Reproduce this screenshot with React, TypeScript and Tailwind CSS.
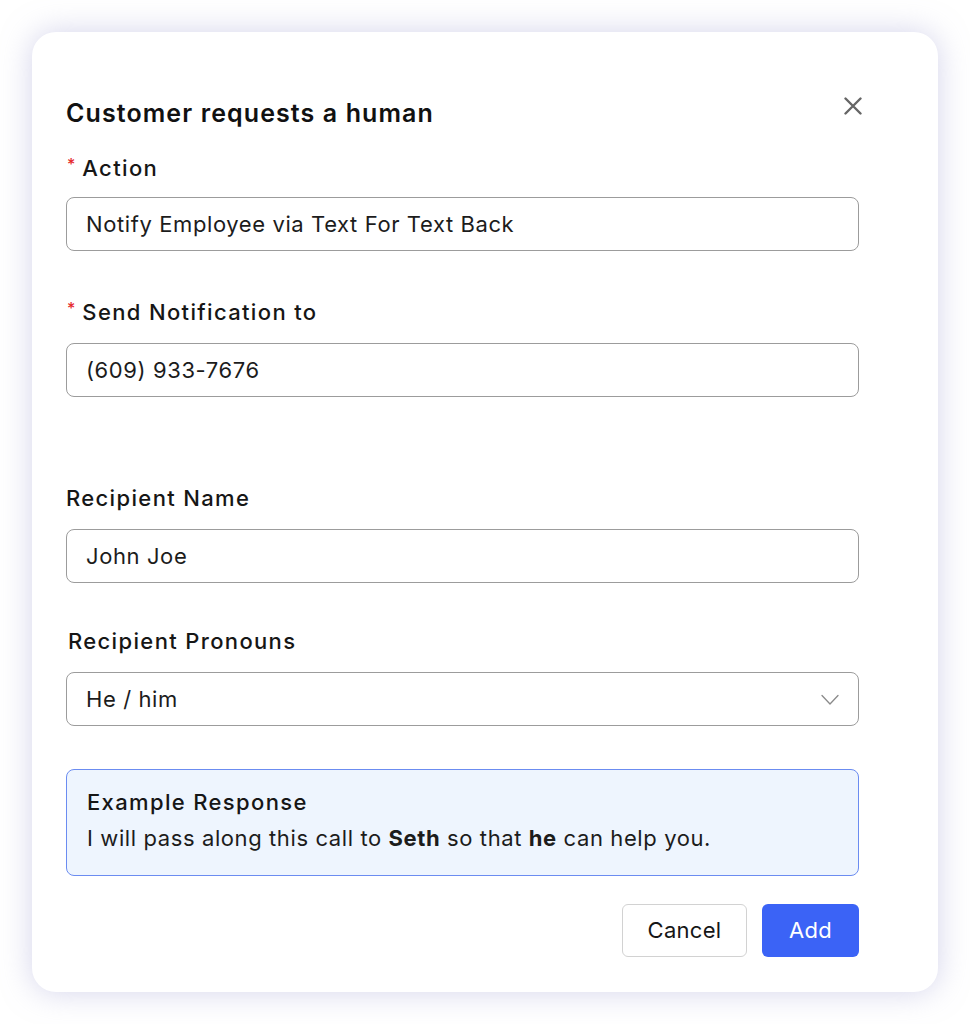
const Label = ({ text, required = false, className = '' }: { text: string; required?: boolean; className?: string }) => (
    <div className={`flex items-start h-[28px] leading-[28px] text-[22px] tracking-[1.35px] font-medium text-[#161616] ${className}`}>
        {required && <span className="text-[#e5292c] text-[16px] leading-[20px] mr-[7px] ml-[1px] tracking-normal">*</span>}
        <span>{text}</span>
    </div>
);

const Field = ({ value, select = false, className = 'mt-[17px]' }: { value: string; select?: boolean; className?: string }) => (
    <div className={`${className} h-[54px] w-full rounded-[8px] border border-[#9c9c9c] bg-white flex items-center justify-between pl-[19px] pr-[19px]`}>
        <span className="text-[22px] tracking-[0.6px] text-[#1c1c1c]">{value}</span>
        {select && (
            <svg width="18" height="12" viewBox="0 0 18 12" fill="none" className="mt-[1px]">
                <path d="M1 1.5 L9 10 L17 1.5" stroke="#8a8a8a" strokeWidth="1.3" strokeLinecap="round" strokeLinejoin="round" />
            </svg>
        )}
    </div>
);

export default function App() {
    return (
        <div className="min-h-[1024px] bg-white p-8" style={{ fontFamily: 'Inter, "Noto Sans", sans-serif' }}>
            <div className="w-full rounded-[24px] bg-white shadow-[0_0_30px_rgba(170,170,215,0.5)] pl-[34px] pr-[79px] pt-[65px] pb-[35px]">
                <div className="flex items-start justify-between">
                    <h2 className="text-[25px] leading-[32px] font-semibold tracking-[1.1px] text-[#111]">Customer requests a human</h2>
                    <button className="-mr-[3px] mt-0">
                        <svg width="18" height="18" viewBox="0 0 18 18" fill="none">
                            <path d="M1.5 1.5 L16.5 16.5 M16.5 1.5 L1.5 16.5" stroke="#666" strokeWidth="2.4" strokeLinecap="round" />
                        </svg>
                    </button>
                </div>

                <Label text="Action" required className="mt-[25px]" />
                <Field value="Notify Employee via Text For Text Back" className="mt-[15px]" />

                <Label text="Send Notification to" required className="mt-[47px]" />
                <Field value="(609) 933-7676" />

                <Label text="Recipient Name" className="mt-[87px]" />
                <Field value="John Joe" />

                <Label text="Recipient Pronouns" className="mt-[44px] pl-[2px]" />
                <Field value="He / him" select />

                <div className="mt-[43px] rounded-[8px] border border-[#6b8cf1] bg-[#eef5fe] pl-[20px] pr-5 pt-[16px] pb-[21px]">
                    <div className="text-[22px] leading-[32px] font-medium tracking-[1.35px] text-[#161616]">Example Response</div>
                    <div className="mt-[4px] text-[22px] leading-[32px] tracking-[0.6px] text-[#1c1c1c]">
                        I will pass along this call to <b className="font-bold">Seth</b> so that <b className="font-bold">he</b> can help you.
                    </div>
                </div>

                <div className="mt-[28px] flex justify-end gap-[15px]">
                    <button className="h-[53px] w-[125px] rounded-[6px] border border-[#d2d2d2] bg-white text-[22px] tracking-[0.3px] text-[#161616]">Cancel</button>
                    <button className="h-[53px] w-[97px] rounded-[6px] bg-[#3b63f6] text-[22px] tracking-[0.3px] text-white">Add</button>
                </div>
            </div>
        </div>
    );
}
